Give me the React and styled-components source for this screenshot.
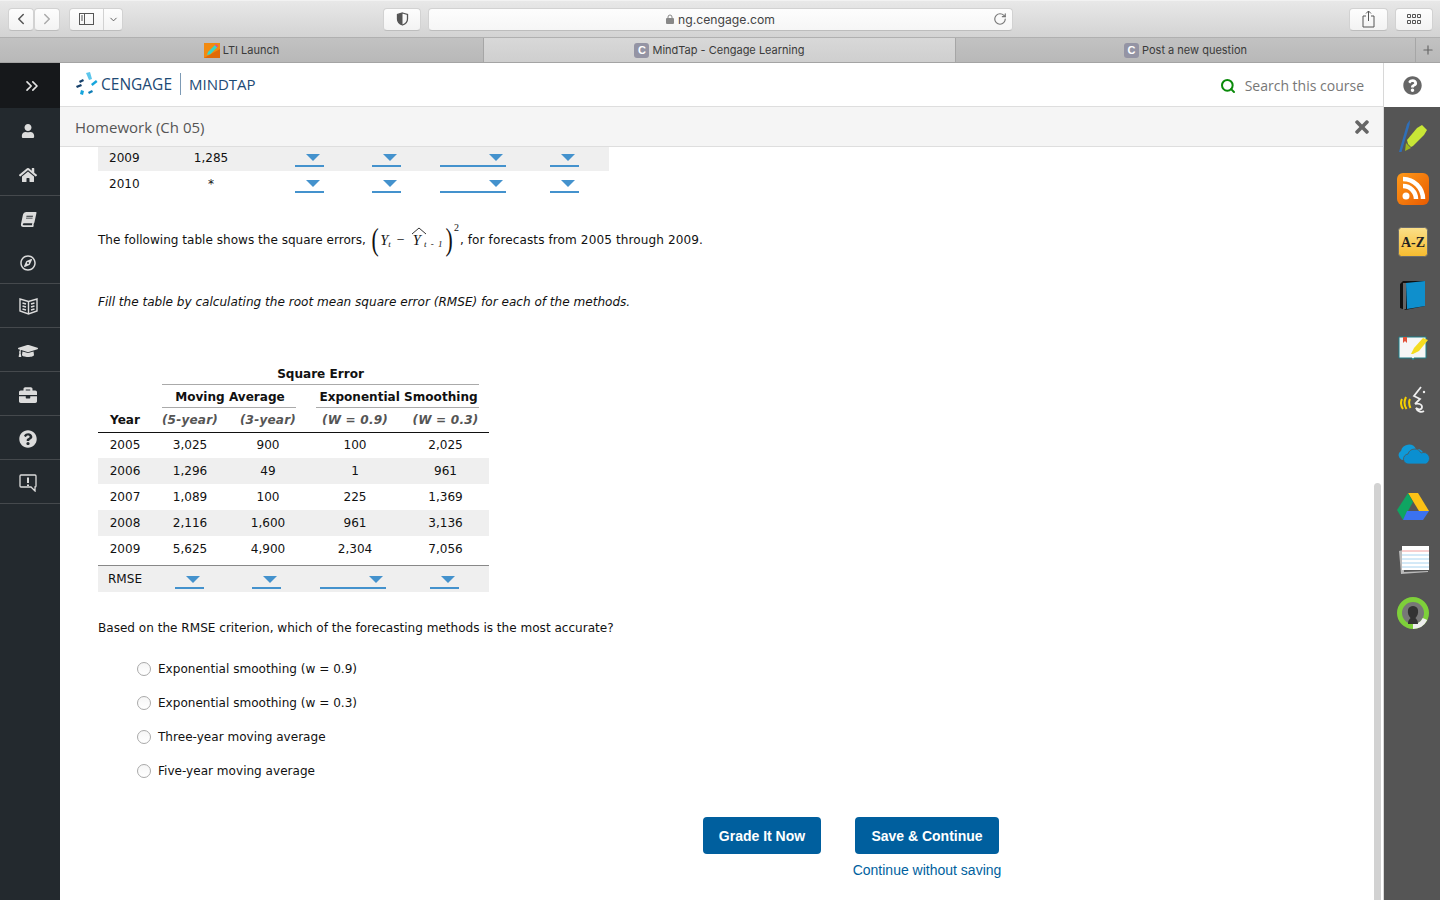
import React from 'react';
import styled, { createGlobalStyle } from 'styled-components';
import { FaUser, FaHome, FaBook, FaRegCompass, FaGraduationCap, FaBriefcase, FaQuestionCircle, FaTimes } from 'react-icons/fa';
import { LuChevronsRight, LuChevronLeft, LuChevronRight, LuChevronDown, LuRotateCw, LuSearch, LuPlus } from 'react-icons/lu';

const Global = createGlobalStyle`
  html, body { margin: 0; padding: 0; height: 100%; overflow: hidden; background: #fff; }
  #root { height: 100%; }
  * { box-sizing: border-box; }
`;
const Page = styled.div`width:1440px;height:900px;display:flex;flex-direction:column;overflow:hidden;font-family:"DejaVu Sans",sans-serif;`;
const Toolbar = styled.div`height:38px;flex:none;display:flex;align-items:center;padding:0 7px 0 8px;background:linear-gradient(#e8e8e8,#d3d3d3);border-top:1px solid #f2f2f2;border-bottom:1px solid #b0b0b0;`;
const TBtnGroup = styled.div`display:flex;gap:${p => p.$gap || 0}px;margin-right:${p => p.$mr || 0}px;`;
const TBtn = styled.div`width:${p => p.$w || 26}px;height:23px;background:linear-gradient(#fdfdfd,#f3f3f3);border:1px solid #d2d2d2;border-bottom-color:#bdbdbd;border-radius:4px;display:flex;align-items:center;justify-content:center;color:${p => p.$c || '#555'};`;
const ShieldBtn = styled(TBtn)`margin:0 7px 0 260px;`;
const Seg = styled.div`display:flex;width:54px;height:23px;background:linear-gradient(#fdfdfd,#f3f3f3);border:1px solid #d2d2d2;border-bottom-color:#bdbdbd;border-radius:4px;color:#555;align-items:center;`;
const SegPart = styled.div`width:${p => p.$w}px;height:100%;display:flex;align-items:center;justify-content:center;border-right:${p => p.$b ? '1px solid #d2d2d2' : 'none'};`;
const Address = styled.div`width:585px;height:23px;background:linear-gradient(#fdfdfd,#f6f6f6);border:1px solid #d2d2d2;border-bottom-color:#bdbdbd;border-radius:4px;display:flex;align-items:center;justify-content:center;position:relative;font:12.2px Inter,sans-serif;color:#444;gap:4px;`;
const Reload = styled.span`position:absolute;right:5px;top:3px;color:#777;display:flex;`;
const Spacer = styled.div`flex:1;`;
const TabBar = styled.div`height:25px;flex:none;display:flex;background:linear-gradient(#c2c2c2,#b8b8b8);border-bottom:1px solid #a4a4a4;`;
const Tab = styled.div`width:${p => p.$w}px;flex:none;display:flex;align-items:center;justify-content:center;gap:3px;font:11px Inter,sans-serif;color:#3a3a3a;border-right:1px solid #a6a6a6;background:${p => p.$active ? 'linear-gradient(#d8d8d8,#cfcfcf)' : 'transparent'};`;
const FavC = styled.span`width:15px;height:15px;border-radius:3px;background:#9494a4;color:#fff;font:bold 11px "Liberation Sans",sans-serif;display:flex;align-items:center;justify-content:center;`;
const PlusTab = styled.div`flex:1;display:flex;align-items:center;justify-content:center;color:#666;`;
const Body = styled.div`flex:1;display:flex;min-height:0;`;
const LeftRail = styled.nav`width:60px;flex:none;background:#23292e;display:flex;flex-direction:column;`;
const RailTop = styled.div`height:45px;background:#16181b;display:flex;align-items:center;justify-content:center;color:#e4e4e4;padding-left:3px;`;
const RailItem = styled.div`height:44px;display:flex;align-items:center;justify-content:center;color:#dcdcdc;padding:2px 4px 0 0;border-bottom:${p => p.$sep ? '1px solid #45494d' : 'none'};`;
const SlantBook = styled(FaBook)`transform:skewX(-12deg);`;
const Main = styled.div`flex:1;display:flex;flex-direction:column;min-width:0;position:relative;`;
const Head = styled.header`height:44px;flex:none;display:flex;align-items:center;padding:0 19px 0 15px;border-bottom:1px solid #dedede;`;
const Brand = styled.div`display:flex;align-items:center;font:15.5px "Open Sans",sans-serif;color:#1d4a75;padding-bottom:2px;`;
const BrandName = styled.span`margin-left:2px;`;
const BrandSep = styled.span`width:1px;height:22px;background:#7d9ab5;margin:0 8px;`;
const BrandProduct = styled.span`font-size:15px;`;
const SearchBox = styled.div`display:flex;align-items:center;gap:9px;font:14px "Open Sans",sans-serif;color:#777;padding-top:2px;`;
const TitleBar = styled.div`height:40px;flex:none;display:flex;align-items:center;justify-content:space-between;padding:0 11px 0 15px;background:#f5f5f5;border-bottom:1px solid #dedede;font:15px "Open Sans",sans-serif;color:#555;`;
const Close = styled.span`color:#666;display:flex;`;
const Content = styled.main`flex:1;overflow:hidden;padding:0 0 0 38px;font-size:12.07px;color:#111;`;
const Scrollbar = styled.div`position:absolute;right:2px;top:420px;bottom:0;width:7px;background:#d2d2d2;border-radius:3.5px 3.5px 0 0;`;
const TopGrid = styled.div`width:511px;height:${p => p.$h}px;display:grid;grid-template-columns:197px 77px 68px 110px 59px;background:${p => p.$alt ? '#efefef' : 'transparent'};`;
const YearCell = styled.div`padding:${p => p.$pt}px 0 0 11px;display:grid;grid-template-columns:60px 84px;line-height:16px;`;
const Val = styled.span`text-align:center;`;
const SelCell = styled.div`display:flex;align-items:flex-end;padding-bottom:4px;`;
const Sel = styled.span`display:inline-block;position:relative;width:${p => p.$w}px;height:16px;border-bottom:2px solid #4492cd;vertical-align:top;`;
const Caret = styled.i`position:absolute;top:3px;right:${p => p.$r}px;width:0;height:0;border-left:7.5px solid transparent;border-right:7.5px solid transparent;border-top:7px solid #4492cd;`;
const Para = styled.p`margin:${p => p.$mt}px 0 0;height:${p => p.$h || 16}px;line-height:${p => p.$h || 16}px;font-style:${p => p.$i ? 'italic' : 'normal'};white-space:nowrap;display:flex;align-items:center;`;
const Math_ = styled.span`display:inline-flex;align-items:center;font-family:"Liberation Serif",serif;margin:0 0 0 4px;position:relative;height:34px;`;
const BigParen = styled.span`font-size:31px;font-weight:normal;line-height:34px;transform:scaleX(.7);`;
const MI = styled.span`display:inline-block;font-style:italic;font-size:14.5px;line-height:16px;position:relative;`;
const MSub = styled.sub`font-style:italic;font-size:9px;vertical-align:-2px;line-height:0;letter-spacing:${p => p.$ls || 0}px;`;
const MOp = styled.span`font-size:14px;margin:0 8px 0 6px;`;
const Hat = styled.svg`position:absolute;left:-2px;top:-5px;`;
const MSup = styled.span`font-size:10px;line-height:10px;align-self:flex-start;margin:0 1px 0 0;`;
const Tail = styled.span`letter-spacing:.1px;`;
const Err = styled.table`margin-top:52px;border-collapse:collapse;width:391px;table-layout:fixed;font-size:12.07px;`;
const Th = styled.th`height:${p => p.$h}px;padding:0;font-weight:bold;text-align:center;color:${p => p.$sub ? '#555' : '#111'};font-style:${p => p.$sub ? 'italic' : 'normal'};letter-spacing:${p => p.$sub ? '.2px' : '0'};white-space:nowrap;position:relative;`;
const Rule = styled.span`position:absolute;left:${p => p.$l}px;right:${p => p.$r}px;bottom:0;height:1px;background:#aaa;`;
const HeadRow = styled.tr`border-bottom:1px solid #111;`;
const Tr = styled.tr`height:26px;background:${p => p.$alt ? '#efefef' : 'transparent'};`;
const Td = styled.td`padding:0;text-align:center;`;
const SelTd = styled.td`padding:7px ${p => p.$pr}px 0 0;text-align:center;vertical-align:top;line-height:0;`;
const Gap = styled.tr`height:3px;`;
const RmseRow = styled.tr`height:27px;background:#efefef;border-top:1px solid #888;`;
const Options = styled.div`margin:24px 0 0 39px;display:flex;flex-direction:column;gap:16px;`;
const Opt = styled.label`display:flex;align-items:center;height:18px;gap:7px;color:#111;`;
const Radio = styled.span`width:14px;height:14px;border-radius:50%;border:1px solid #a9a9a9;background:linear-gradient(#f6f6f6,#fff);`;
const Actions = styled.div`display:flex;margin:37px 0 0 605px;gap:34px;align-items:flex-start;`;
const Btn = styled.button`height:37px;width:${p => p.$w}px;padding:0;border:0;border-radius:4px;background:#005f9e;color:#fff;font:bold 14px "Liberation Sans",sans-serif;`;
const SaveCol = styled.div`display:flex;flex-direction:column;align-items:center;width:144px;`;
const Cont = styled.a`margin-top:8px;font:14px "Liberation Sans",sans-serif;color:#005f9e;white-space:nowrap;`;
const RightRail = styled.aside`width:57px;flex:none;display:flex;flex-direction:column;border-left:1px solid #d8d8d8;`;
const RightTop = styled.div`height:44px;flex:none;background:#fff;display:flex;align-items:center;justify-content:center;color:#666;`;
const Tools = styled.div`flex:1;background:#555;display:flex;flex-direction:column;align-items:center;padding:2px 0 0 2px;`;
const Tool = styled.div`height:53px;display:flex;align-items:center;justify-content:center;flex:none;width:100%;`;

const Fav = () => <svg width="16" height="15" viewBox="0 0 16 15"><rect width="16" height="15" fill="#f28a10"/><path d="M0 15h16V6z" fill="#e06a08"/><path d="M3 12l1-3 7-7 2.300 2.300-7 7z" fill="#36d6c8"/><path d="M11 2l1-1 2.200 2.200-1 1z" fill="#e43fa0"/></svg>;
const Logo = () => <svg width="24" height="24" viewBox="0 0 24 24"><path d="M11 1l4-1 2 7-3 1z" fill="#5cc6ec"/><path d="M16 12l5-4 1.500 2-5 4z" fill="#16a6dd"/><path d="M6 18l3 1-1 4-3-1z" fill="#16a6dd"/><path d="M13 20l4-2 1 2-4 2z" fill="#0e7cb5"/><path d="M1 14l5-2 1 2-5 2z" fill="#16406b"/><path d="M4 9l4-2 1 2-4 2z" fill="#16406b"/></svg>;
const OpenBook = () => <svg width="19" height="17" viewBox="0 0 19 17" fill="none" stroke="#dcdcdc" strokeWidth="1.400"><path d="M9.500 3.500L1 1v12l8.500 3 8.500-3V1z"/><path d="M9.500 3.500V16M3.500 5l3.500 1M3.500 8l3.500 1M3.500 11l3.500 1M15.500 5L12 6M15.500 8L12 9M15.500 11L12 12"/></svg>;
const Flag = () => <svg width="18" height="18" viewBox="0 0 18 18" fill="none"><path d="M2 1h14a1 1 0 011 1v10a1 1 0 01-1 1v4l-4-4H2a1 1 0 01-1-1V2a1 1 0 011-1z" stroke="#dcdcdc" strokeWidth="1.300"/><path d="M9 3.500v5.500M9 10.500v1.500" stroke="#dcdcdc" strokeWidth="2"/></svg>;
const Pens = () => <svg width="30" height="34" viewBox="0 0 30 34"><path d="M1 33L9 5l3-4-.5 5-8 27z" fill="#2f6fb8"/><path d="M10 25l3 3 2-1 11-11 3-5-5-5-5 3-10 12z" fill="#c8e636"/><path d="M8 24l5 5-6 3z" fill="#9fb81e"/></svg>;
const Rss = () => <svg width="32" height="32" viewBox="0 0 32 32"><defs><linearGradient id="rg" x1="0" y1="0" x2="1" y2="1"><stop offset="0" stopColor="#ff9a1a"/><stop offset="1" stopColor="#e85a00"/></linearGradient></defs><rect width="32" height="32" rx="6" fill="url(#rg)"/><circle cx="9" cy="23" r="3.500" fill="#fff"/><path d="M6 13a13 13 0 0113 13M6 6a20 20 0 0120 20" stroke="#fff" strokeWidth="4.500" fill="none"/></svg>;
const Az = () => <svg width="30" height="30" viewBox="0 0 30 30"><defs><linearGradient id="az" x1="0" y1="0" x2="0" y2="1"><stop offset="0" stopColor="#fbe08a"/><stop offset="1" stopColor="#f6bb2e"/></linearGradient></defs><rect x=".5" y=".5" width="29" height="29" rx="3" fill="url(#az)" stroke="#6b6b6b"/><text x="15" y="20" textAnchor="middle" fontFamily="Liberation Serif" fontWeight="bold" fontSize="14" fill="#222">A-Z</text></svg>;
const BlueBook = () => <svg width="28" height="32" viewBox="0 0 28 32"><path d="M1 5l3-3h22v25l-20 4-5-2z" fill="#111"/><path d="M7 4L26 2v25L8 30z" fill="#0f8fcc"/><path d="M4 4h3v26l-3 1z" fill="#666"/></svg>;
const Note = () => <svg width="30" height="26" viewBox="0 0 30 26"><path d="M1 2h27v21H16l-1 2-1-2H1z" fill="#f6f6f6" stroke="#1f7f88"/><path d="M5 2h4v6l-2-2-2 2z" fill="#e2533a"/><path d="M13 19l3-6 9-10 5 2-9 11-6 3z" fill="#f5dc20"/></svg>;
const Hearing = () => <svg width="26" height="30" viewBox="0 0 26 30" fill="none"><path d="M2 13c-1.500 3-1 7 1 10M6 11c-2 4-1.500 9 .5 12M10 13c-1.500 3-1 6 .5 9" stroke="#f5d000" strokeWidth="2"/><path d="M21 1l-7 9 6 3-5 5c3-1 7 0 7 3s-4 3-6 1c1 3 5 5 8 3" stroke="#eee" strokeWidth="1.800"/><circle cx="24" cy="6" r="1.200" fill="#eee"/></svg>;
const Cloud = () => <svg width="33" height="21" viewBox="0 0 33 21"><path d="M5 17a5 5 0 01-1-9 8 8 0 0115-2 7 7 0 018 6l-22 5z" fill="#0f9ad8"/><path d="M12 21a5 5 0 01-1-10 7 7 0 0113-1 6 6 0 015 11z" fill="#0b8fd0" stroke="#555" strokeWidth=".8"/></svg>;
const Drive = () => <svg width="32" height="27" viewBox="0 0 32 27"><path d="M11 0h10l11 18H22z" fill="#fbc116"/><path d="M11 0l5 9-10 18L0 17z" fill="#0fa562"/><path d="M10 18h22l-6 9H6z" fill="#3b72f0"/></svg>;
const Cards = () => <svg width="31" height="29" viewBox="0 0 31 29"><path d="M1 6l4-1 1 22 24-1v1L3 29z" fill="#bbb"/><rect x="4" y="1" width="27" height="24" fill="#fff"/><path d="M4 6h27" stroke="#f0a0a0"/><path d="M4 10h27M4 14h27M4 18h27M4 22h27" stroke="#a8d4f0"/></svg>;
const Avatar = () => <svg width="32" height="32" viewBox="0 0 32 32"><circle cx="16" cy="16" r="13.500" fill="#777" stroke="#7ed03a" strokeWidth="5"/><path d="M16 29.500A13.500 13.500 0 0028 22" stroke="#eee" strokeWidth="5" fill="none"/><path d="M11 27c0-4 2-5 2.500-6-2-2-3-5-2.500-8 .5-3 3-4 5-4s4.500 1 5 4c.5 3-.5 6-2.500 8 .5 1 2.500 2 2.500 6z" fill="#333"/></svg>;
const Halfshield = () => <svg width="13" height="14" viewBox="0 0 13 14"><path d="M6.500 1l5 1.500V7c0 3-2 5-5 6-3-1-5-3-5-6V2.500z" fill="none" stroke="#555" strokeWidth="1.300"/><path d="M6.500 1L1.500 2.500V7c0 3 2 5 5 6z" fill="#555"/></svg>;
const Sidebar = () => <svg width="15" height="12" viewBox="0 0 15 12" fill="none" stroke="#555"><rect x=".5" y=".5" width="14" height="11"/><path d="M5.500 .5v11M2 3h2M2 5h2M2 7h2"/></svg>;
const Share = () => <svg width="13" height="18" viewBox="0 0 13 18" fill="none" stroke="#555"><path d="M4 6H1v11h11V6H9M6.500 11V1M4 3.500L6.500 1 9 3.500"/></svg>;
const Grid = () => <svg width="14" height="10" viewBox="0 0 14 10" fill="none" stroke="#555"><path d="M.5.500h3v3h-3zM5.500.500h3v3h-3zM10.500.500h3v3h-3zM.5 6.500h3v3h-3zM5.500 6.500h3v3h-3zM10.500 6.500h3v3h-3z"/></svg>;
const Lock = () => <svg width="8" height="10" viewBox="0 0 8 10"><rect y="4" width="8" height="6" rx="1" fill="#888"/><path d="M2 4.500V3a2 2 0 014 0v1.500" fill="none" stroke="#888"/></svg>;
const Select = ({ w, r }) => <Sel $w={w}><Caret $r={r} /></Sel>;

const sel = [[29, 4, 1], [29, 4, 3], [66, 3, 4], [29, 4, 2]];
const TopRow = ({ y, v, alt, h, pt }) => (
  <TopGrid $alt={alt} $h={h}>
    <YearCell $pt={pt}><span>{y}</span><Val>{v}</Val></YearCell>
    {sel.map(([w, r], i) => <SelCell key={i}><Select w={w} r={r} /></SelCell>)}
  </TopGrid>
);
const rows = [
  ['2005', '3,025', '900', '100', '2,025'],
  ['2006', '1,296', '49', '1', '961'],
  ['2007', '1,089', '100', '225', '1,369'],
  ['2008', '2,116', '1,600', '961', '3,136'],
  ['2009', '5,625', '4,900', '2,304', '7,056'],
];
const options = ['Exponential smoothing (w = 0.9)', 'Exponential smoothing (w = 0.3)', 'Three-year moving average', 'Five-year moving average'];
const rail = [[<FaUser size={14} />], [<FaHome size={18} />, 1], [<SlantBook size={15} />], [<FaRegCompass size={16} />, 1], [<OpenBook />, 1], [<FaGraduationCap size={20} />, 1], [<FaBriefcase size={18} />, 1], [<FaQuestionCircle size={18} />, 1], [<Flag />, 1]];
const tools = [<Pens />, <Rss />, <Az />, <BlueBook />, <Note />, <Hearing />, <Cloud />, <Drive />, <Cards />, <Avatar />];

export default function App() {
  return (
    <Page>
      <Global />
      <Toolbar>
        <TBtnGroup $mr={9}><TBtn><LuChevronLeft size={18} /></TBtn><TBtn $c="#aaa"><LuChevronRight size={18} /></TBtn></TBtnGroup>
        <Seg><SegPart $w={34} $b><Sidebar /></SegPart><SegPart $w={18}><LuChevronDown size={11} /></SegPart></Seg>
        <ShieldBtn $w={38}><Halfshield /></ShieldBtn>
        <Address><Lock />ng.cengage.com<Reload><LuRotateCw size={14} /></Reload></Address>
        <Spacer />
        <TBtnGroup $gap={7}><TBtn $w={39}><Share /></TBtn><TBtn $w={38}><Grid /></TBtn></TBtnGroup>
      </Toolbar>
      <TabBar>
        <Tab $w={484}><Fav />LTI Launch</Tab>
        <Tab $w={472} $active><FavC>C</FavC>MindTap - Cengage Learning</Tab>
        <Tab $w={460}><FavC>C</FavC>Post a new question</Tab>
        <PlusTab><LuPlus size={14} /></PlusTab>
      </TabBar>
      <Body>
        <LeftRail>
          <RailTop><LuChevronsRight size={20} /></RailTop>
          {rail.map(([icon, s], i) => <RailItem key={i} $sep={s}>{icon}</RailItem>)}
        </LeftRail>
        <Main>
          <Head>
            <Brand><Logo /><BrandName>CENGAGE</BrandName><BrandSep /><BrandProduct>MINDTAP</BrandProduct></Brand>
            <Spacer />
            <SearchBox><LuSearch size={16} color="#0a8a0a" strokeWidth={3} />Search this course</SearchBox>
          </Head>
          <TitleBar>Homework (Ch 05)<Close><FaTimes size={20} /></Close></TitleBar>
          <Content>
            <TopRow y="2009" v="1,285" alt h={24} pt={3} />
            <TopRow y="2010" v="*" h={26} pt={5} />
            <Para $mt={26} $h={34}>
              The following table shows the square errors,
              <Math_>
                <BigParen>(</BigParen><MI>Y<MSub>t</MSub></MI><MOp>−</MOp>
                <MI>Y<Hat width="16" height="8" viewBox="0 0 16 8" fill="none" stroke="#333"><path d="M1 7L8 1l7 6" /></Hat><MSub $ls={1}> t - 1</MSub></MI>
                <BigParen>)</BigParen><MSup>2</MSup>
              </Math_>
              <Tail>, for forecasts from 2005 through 2009.</Tail>
            </Para>
            <Para $mt={37} $i>Fill the table by calculating the root mean square error (RMSE) for each of the methods.</Para>
            <Err>
              <colgroup><col width="54" /><col width="76" /><col width="80" /><col width="94" /><col width="87" /></colgroup>
              <thead>
                <tr><Th $h={23} /><Th $h={23} colSpan={4}>Square Error<Rule $l={10} $r={10} /></Th></tr>
                <tr><Th $h={23} /><Th $h={23} colSpan={2}>Moving Average<Rule $l={10} $r={12} /></Th><Th $h={23} colSpan={2}>Exponential Smoothing<Rule $l={8} $r={10} /></Th></tr>
                <HeadRow><Th $h={24}>Year</Th><Th $h={24} $sub>(5-year)</Th><Th $h={24} $sub>(3-year)</Th><Th $h={24} $sub>(W = 0.9)</Th><Th $h={24} $sub>(W = 0.3)</Th></HeadRow>
              </thead>
              <tbody>
                {rows.map((r, i) => <Tr key={r[0]} $alt={i % 2 === 1}>{r.map((c, j) => <Td key={j}>{c}</Td>)}</Tr>)}
                <Gap />
                <RmseRow><Td>RMSE</Td>{sel.map(([w, r, pr], i) => <SelTd key={i} $pr={pr}><Select w={w} r={r} /></SelTd>)}</RmseRow>
              </tbody>
            </Err>
            <Para $mt={28}>Based on the RMSE criterion, which of the forecasting methods is the most accurate?</Para>
            <Options>{options.map(o => <Opt key={o}><Radio />{o}</Opt>)}</Options>
            <Actions>
              <Btn $w={118}>Grade It Now</Btn>
              <SaveCol><Btn $w={144}>Save &amp; Continue</Btn><Cont>Continue without saving</Cont></SaveCol>
            </Actions>
          </Content>
          <Scrollbar />
        </Main>
        <RightRail>
          <RightTop><FaQuestionCircle size={19} /></RightTop>
          <Tools>{tools.map((t, i) => <Tool key={i}>{t}</Tool>)}</Tools>
        </RightRail>
      </Body>
    </Page>
  );
}
